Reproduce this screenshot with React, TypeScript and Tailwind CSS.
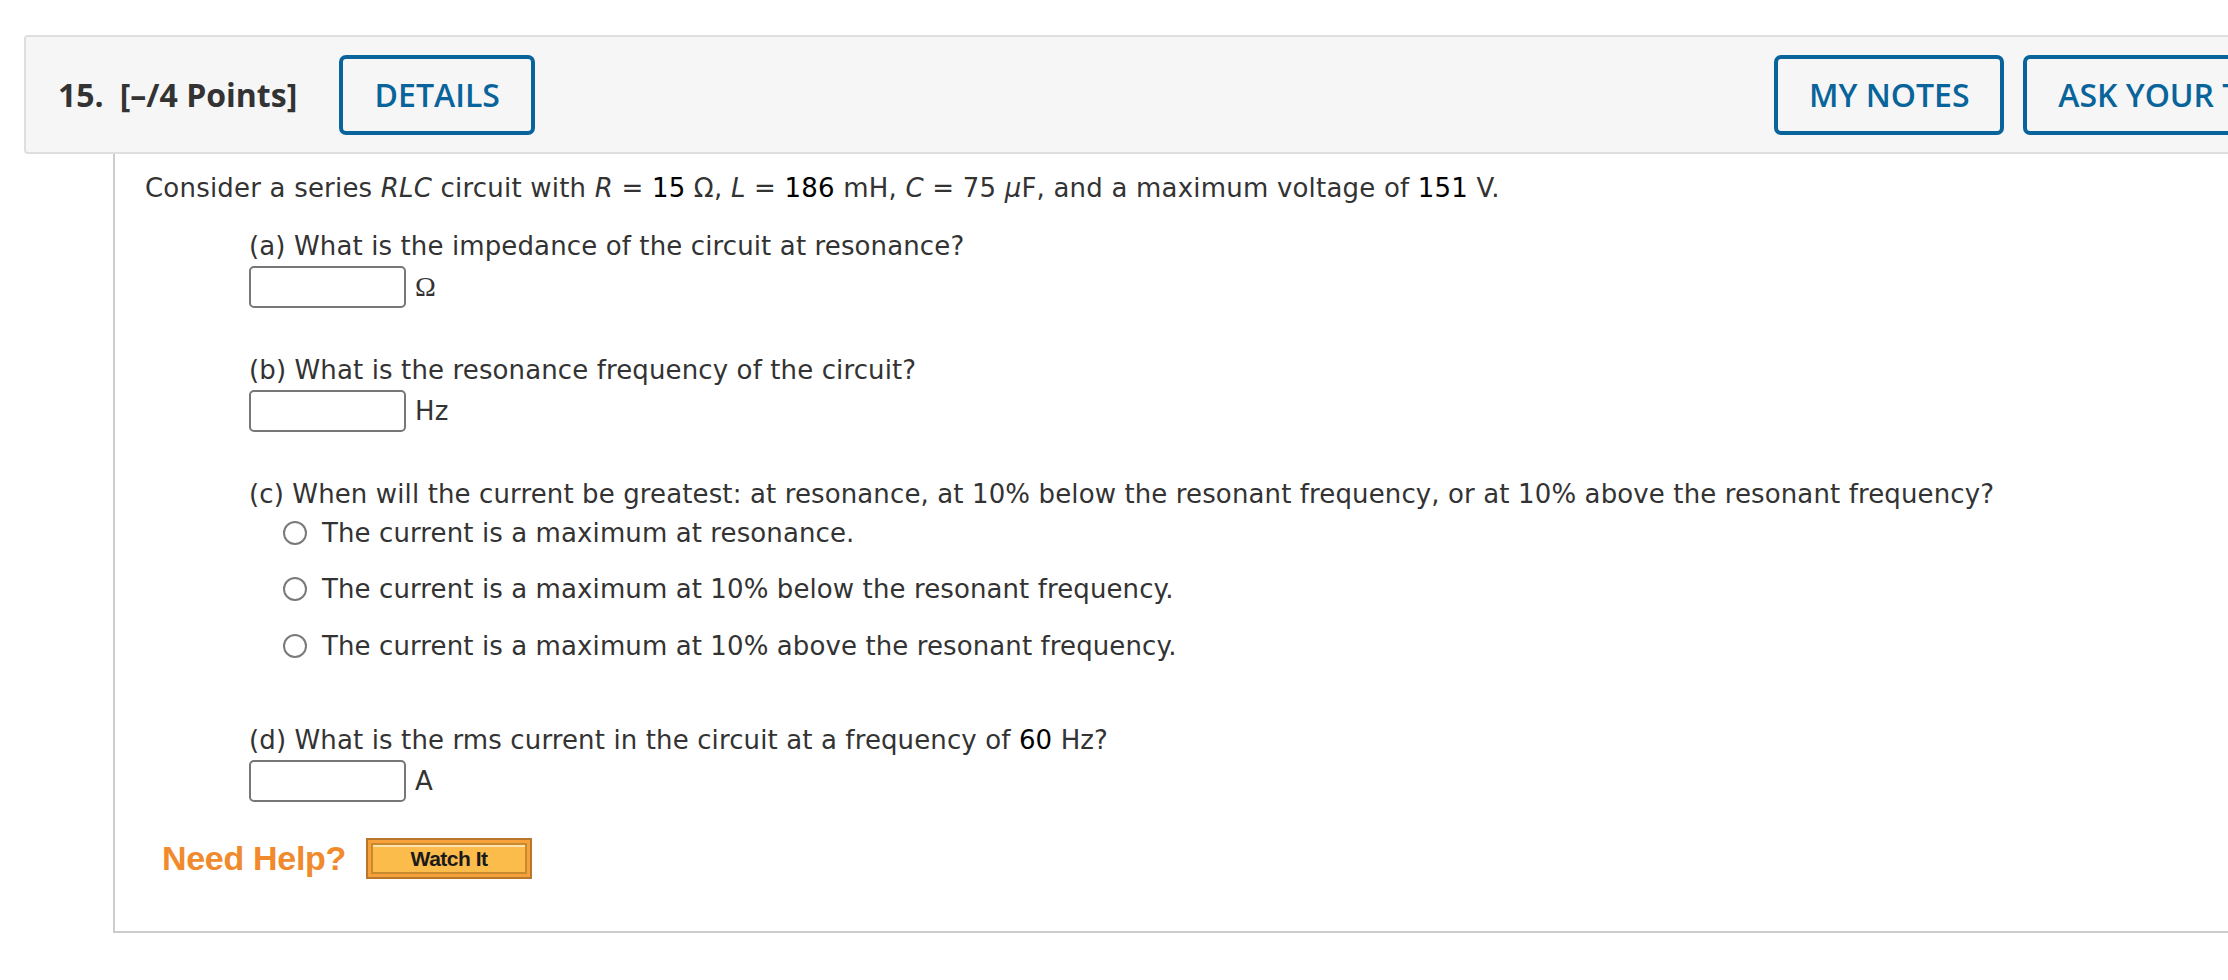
import React from "react";

const body = { fontFamily: '"DejaVu Sans", Verdana, sans-serif' };
const open = { fontFamily: '"Open Sans", "Noto Sans", sans-serif' };

function Input({ unit, serif }: { unit: string; serif?: boolean }) {
  return (
    <div className="flex items-center h-[42px]">
      <div className="w-[157px] h-[42px] border-2 border-[#777777] rounded-[5px] bg-white" />
      <span
        className={serif ? "ml-[9px] text-[28px] text-[#333333]" : "ml-[9px] text-[26px] text-[#333333]"}
        style={serif ? { fontFamily: '"Liberation Serif", "DejaVu Serif", serif' } : body}
      >
        {unit}
      </span>
    </div>
  );
}

function Radio({ text }: { text: string }) {
  return (
    <div className="flex items-center h-[34px] pl-[34px]">
      <div className="w-[24px] h-[24px] rounded-full border-2 border-[#7a7a7a] bg-white shrink-0" />
      <span className="ml-[15px] text-[26px] text-[#333333] leading-[34px] tracking-[0.1px]" style={body}>
        {text}
      </span>
    </div>
  );
}

export default function App() {
  return (
    <div className="w-[2228px] h-[980px] bg-white overflow-hidden relative">
      <div className="w-[2600px]">
        {/* Header */}
        <div className="mt-[35px] ml-[24px] h-[119px] bg-[#f6f6f6] border-2 border-[#dedede] rounded-[4px] flex items-center pl-[32px]">
          <div className="text-[32px] font-bold text-[#333333] flex items-center shrink-0 whitespace-nowrap" style={open}>
            <span>15.</span>
            <span className="ml-[16px]">[–/4 Points]</span>
          </div>
          <div
            className="ml-[42px] w-[196px] h-[80px] shrink-0 border-[4px] border-[#08649a] rounded-[7px] flex items-center justify-center text-[32px] font-semibold text-[#08649a]"
            style={open}
          >
            DETAILS
          </div>
          <div
            className="ml-[1239px] w-[230px] h-[80px] shrink-0 border-[4px] border-[#08649a] rounded-[7px] flex items-center justify-center text-[32px] font-semibold text-[#08649a] whitespace-nowrap"
            style={open}
          >
            MY NOTES
          </div>
          <div
            className="ml-[19px] w-[400px] h-[80px] shrink-0 border-[4px] border-[#08649a] rounded-[7px] flex items-center justify-start pl-[31px] text-[32px] font-semibold text-[#08649a] whitespace-nowrap"
            style={open}
          >
            ASK YOUR TEACHER
          </div>
        </div>

        {/* Content */}
        <div className="ml-[113px] border-l-2 border-b-2 border-[#cccccc] pt-[17px] pb-[47px]">
          <div className="pl-[30px] text-[26px] leading-[34px] text-[#333333] tracking-[0.2px]" style={body}>
            Consider a series <i>RLC</i> circuit with <i>R</i> = <span className="text-black">15</span> Ω,{" "}
            <i>L</i> = <span className="text-black">186</span> mH, <i>C</i> = 75 <i>μ</i>F, and a maximum voltage of{" "}
            <span className="text-black">151</span> V.
          </div>

          <div className="pl-[134px] tracking-[0.12px]">
            <div className="mt-[24px] text-[26px] leading-[34px] text-[#333333]" style={body}>
              (a) What is the impedance of the circuit at resonance?
            </div>
            <div className="mt-[3px]">
              <Input unit="Ω" serif />
            </div>

            <div className="mt-[45px] text-[26px] leading-[34px] text-[#333333]" style={body}>
              (b) What is the resonance frequency of the circuit?
            </div>
            <div className="mt-[3px]">
              <Input unit="Hz" />
            </div>

            <div className="mt-[45px] text-[26px] leading-[34px] text-[#333333]" style={body}>
              (c) When will the current be greatest: at resonance, at 10% below the resonant frequency, or at 10% above the resonant frequency?
            </div>
            <div className="mt-[5px]">
              <Radio text="The current is a maximum at resonance." />
            </div>
            <div className="mt-[22px]">
              <Radio text="The current is a maximum at 10% below the resonant frequency." />
            </div>
            <div className="mt-[23px]">
              <Radio text="The current is a maximum at 10% above the resonant frequency." />
            </div>

            <div className="mt-[60px] text-[26px] leading-[34px] text-[#333333]" style={body}>
              (d) What is the rms current in the circuit at a frequency of <span className="text-black">60</span> Hz?
            </div>
            <div className="mt-[3px]">
              <Input unit="A" />
            </div>
          </div>

          <div className="mt-[31px] pl-[47px] flex items-center">
            <span
              className="text-[34px] font-bold text-[#f08a2c] tracking-[-0.3px]"
              style={{ fontFamily: '"Liberation Sans", Arial, sans-serif' }}
            >
              Need Help?
            </span>
            <div className="ml-[20px] w-[166px] h-[41px] border-2 border-[#b8772f] bg-[#f6a13a] p-[3px]">
              <div className="w-full h-full border-2 border-[#c98a2f] bg-[#fbbc4c] flex items-center justify-center shadow-[inset_0_2px_0_#fde3b0]">
                <span
                  className="text-[21px] font-bold text-[#1a1a1a] tracking-[-0.5px]"
                  style={{ fontFamily: '"Liberation Sans", Arial, sans-serif' }}
                >
                  Watch It
                </span>
              </div>
            </div>
          </div>
        </div>
      </div>
    </div>
  );
}
